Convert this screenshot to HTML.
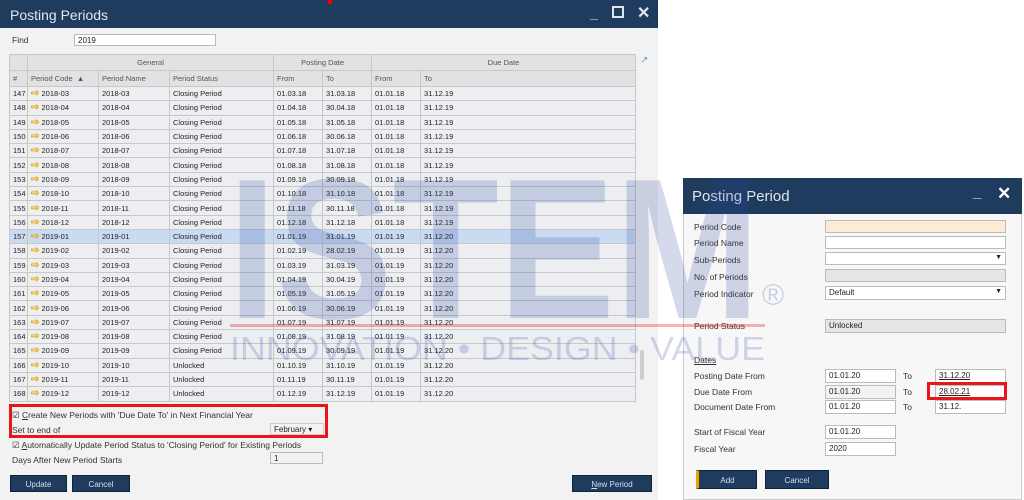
<!DOCTYPE html><html><head><style>
*{margin:0;padding:0;box-sizing:border-box}
body{width:1024px;height:500px;background:#fff;position:relative;overflow:hidden;font-family:"Liberation Sans",sans-serif;font-size:8px;color:#222}
.a{position:absolute}
.tb{background:#1f3c5e;color:#dfe6ee}
table{border-collapse:collapse;position:absolute;left:9px;top:54px;width:627px;table-layout:fixed}
td{height:14.3px;border:1px solid #c8c8c8;padding:0 3px;white-space:nowrap;overflow:hidden;font-size:7.5px;background:#eceef2}
tr.h td{background:#e2e2e2;color:#555;height:16px;font-size:7.5px}
tr.sel td{background:#c9dbf2}
.ar{color:#e8a400;font-weight:bold;font-size:10px;line-height:8px}
.in{position:absolute;border:1px solid #bbb;background:#fff;height:12px;font-size:8px;padding:1px 3px}
.btn{position:absolute;background:#1f3c5e;color:#dde;font-size:8px;text-align:center;line-height:17px;height:17px;border:1px solid #0e2238}
.lb{position:absolute;font-size:8.5px;color:#333}
</style></head><body>
<div class="a" style="left:0;top:0;width:658px;height:500px;background:#f2f2f2"></div>
<div class="a tb" style="left:0;top:0;width:658px;height:28px;font-size:14px;padding:7px 10px">Posting Periods
<span class="a" style="left:590px;top:5px;font-size:14px;font-weight:bold">_</span>
<span class="a" style="left:612px;top:6px;width:12px;height:12px;border:2px solid #dfe6ee"></span>
<span class="a" style="left:637px;top:3px;font-size:16px;font-weight:bold">✕</span></div>
<div class="a" style="left:328px;top:0;width:4px;height:4px;background:#e00"></div>
<div class="lb" style="left:12px;top:35px">Find</div>
<div class="in" style="left:74px;top:34px;width:142px">2019</div>
<table>
<colgroup><col style="width:18px"><col style="width:71px"><col style="width:71px"><col style="width:104px"><col style="width:49px"><col style="width:49px"><col style="width:49px"><col></colgroup>
<tr class="h"><td></td><td colspan="3" style="text-align:center">General</td><td colspan="2" style="text-align:center">Posting Date</td><td colspan="2" style="text-align:center">Due Date</td></tr>
<tr class="h"><td>#</td><td>Period Code &nbsp;▲</td><td>Period Name</td><td>Period Status</td><td>From</td><td>To</td><td>From</td><td>To</td></tr>
<tbody id="tb"></tbody></table>
<div class="a" style="left:640px;top:55px;color:#6aa0d8;font-size:10px">↗</div>
<div class="a" style="left:640px;top:350px;width:4px;height:30px;background:#ccc;border-radius:2px"></div>
<div class="lb" style="left:12px;top:410px">☑ <u>C</u>reate New Periods with 'Due Date To' in Next Financial Year</div>
<div class="lb" style="left:12px;top:425px">Set to end of</div>
<div class="in" style="left:270px;top:423px;width:54px;background:#f2f2f2;border-color:#ccc">February ▾</div>
<div class="a" style="left:9px;top:404px;width:319px;height:34px;border:3px solid #e8151b"></div>
<div class="lb" style="left:12px;top:440px">☑ <u>A</u>utomatically Update Period Status to 'Closing Period' for Existing Periods</div>
<div class="lb" style="left:12px;top:455px">Days After New Period Starts</div>
<div class="in" style="left:270px;top:452px;width:53px;background:#f2f2f2">1</div>
<div class="btn" style="left:10px;top:475px;width:57px">Update</div>
<div class="btn" style="left:72px;top:475px;width:58px">Cancel</div>
<div class="btn" style="left:572px;top:475px;width:80px"><u>N</u>ew Period</div>
<!-- right window -->
<div class="a" style="left:683px;top:178px;width:339px;height:322px;background:#f7f7f7;border:1px solid #ccc"></div>
<div class="a tb" style="left:683px;top:178px;width:339px;height:36px;font-size:15px;padding:10px 9px">Posting Period
<span class="a" style="left:290px;top:6px;font-size:15px;font-weight:bold">_</span>
<span class="a" style="left:314px;top:6px;font-size:17px;font-weight:bold;color:#fff">✕</span></div>
<div class="lb" style="left:694px;top:222px">Period Code</div>
<div class="lb" style="left:694px;top:238px">Period Name</div>
<div class="lb" style="left:694px;top:255px">Sub-Periods</div>
<div class="lb" style="left:694px;top:272px">No. of Periods</div>
<div class="lb" style="left:694px;top:289px">Period Indicator</div>
<div class="lb" style="left:694px;top:321px">Period Status</div>
<div class="lb" style="left:694px;top:355px"><u>Dates</u></div>
<div class="lb" style="left:694px;top:371px">Posting Date From</div>
<div class="lb" style="left:694px;top:387px">Due Date From</div>
<div class="lb" style="left:694px;top:402px">Document Date From</div>
<div class="lb" style="left:694px;top:427px">Start of Fiscal Year</div>
<div class="lb" style="left:694px;top:444px">Fiscal Year</div>
<div class="in" style="left:825px;top:220px;width:181px;height:13px;background:#fdebd3"></div>
<div class="in" style="left:825px;top:236px;width:181px;height:13px"></div>
<div class="in" style="left:825px;top:252px;width:181px;height:13px;text-align:right;font-size:7px">▼</div>
<div class="in" style="left:825px;top:269px;width:181px;height:13px;background:#e6e6e6"></div>
<div class="in" style="left:825px;top:286px;width:181px;height:14px">Default<span style="float:right;font-size:7px">▼</span></div>
<div class="in" style="left:825px;top:319px;width:181px;height:14px;background:#e6e6e6">Unlocked</div>
<div class="in" style="left:825px;top:369px;width:71px;height:14px">01.01.20</div>
<div class="in" style="left:825px;top:385px;width:71px;height:14px;background:#f2f2f2">01.01.20</div>
<div class="in" style="left:825px;top:400px;width:71px;height:14px">01.01.20</div>
<div class="lb" style="left:903px;top:371px">To</div>
<div class="lb" style="left:903px;top:387px">To</div>
<div class="lb" style="left:903px;top:402px">To</div>
<div class="in" style="left:935px;top:369px;width:71px;height:14px"><u>31.12.20</u></div>
<div class="in" style="left:935px;top:385px;width:71px;height:14px"><u>28.02.21</u></div>
<div class="in" style="left:935px;top:400px;width:71px;height:14px">31.12.</div>
<div class="a" style="left:927px;top:382px;width:80px;height:18px;border:3px solid #e8151b"></div>
<div class="in" style="left:825px;top:425px;width:71px;height:14px">01.01.20</div>
<div class="in" style="left:825px;top:442px;width:71px;height:14px">2020</div>
<div class="btn" style="left:696px;top:470px;width:61px;height:19px;line-height:19px;border-left:3px solid #e8a400">Add</div>
<div class="btn" style="left:765px;top:470px;width:64px;height:19px;line-height:19px">Cancel</div>
<!-- watermark overlay -->
<svg class="a" style="left:0;top:0;pointer-events:none" width="1024" height="500">
<text x="228" y="318" font-family="Liberation Sans" font-weight="bold" font-size="200" textLength="532" lengthAdjust="spacingAndGlyphs" fill="rgba(40,70,160,0.2)">ISTEM</text>
<text x="762" y="305" font-family="Liberation Sans" font-size="30" fill="rgba(40,70,160,0.22)">®</text>
<rect x="230" y="324" width="535" height="3" fill="rgba(230,40,40,0.35)"/>
<text x="230" y="360" font-family="Liberation Sans" font-size="33" textLength="535" lengthAdjust="spacingAndGlyphs" fill="rgba(40,70,160,0.2)">INNOVATION • DESIGN • VALUE</text>
</svg>
<script>
var r=[],s;
var m=["03","04","05","06","07","08","09","10","11","12"],e18=["31.03.18","30.04.18","31.05.18","30.06.18","31.07.18","31.08.18","30.09.18","31.10.18","30.11.18","31.12.18"];
for(var i=0;i<10;i++)r.push([147+i,"2018-"+m[i],"Closing Period","01."+m[i]+".18",e18[i],"01.01.18","31.12.19"]);
var e19=["31.01.19","28.02.19","31.03.19","30.04.19","31.05.19","30.06.19","31.07.19","31.08.19","30.09.19","31.10.19","30.11.19","31.12.19"];
for(i=0;i<12;i++){var mm=("0"+(i+1)).slice(-2);r.push([157+i,"2019-"+mm,i<9?"Closing Period":"Unlocked","01."+mm+".19",e19[i],"01.01.19","31.12.20"]);}
s="";r.forEach(function(x){s+='<tr'+(x[0]==157?' class="sel"':'')+'><td>'+x[0]+'</td><td><span class="ar">⇨</span> '+x[1]+'</td><td>'+x[1]+'</td><td>'+x[2]+'</td><td>'+x[3]+'</td><td>'+x[4]+'</td><td>'+x[5]+'</td><td>'+x[6]+'</td></tr>'});
document.getElementById("tb").innerHTML=s;
</script>
</body></html>
